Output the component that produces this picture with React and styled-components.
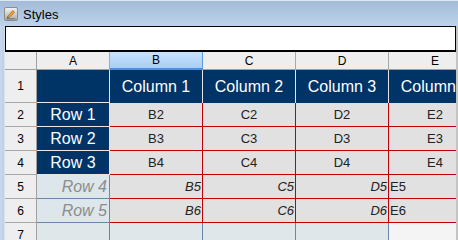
import React from "react";
import styled, { createGlobalStyle, css } from "styled-components";

const GlobalStyle = createGlobalStyle`
  html, body {
    margin: 0;
    padding: 0;
    background: #ffffff;
  }
  body {
    font-family: "Liberation Sans", Arial, sans-serif;
  }
`;

const columns = ["A", "B", "C", "D", "E"];

// each row: kind of the A cell and the texts of B..E
const rows = [
  { no: 1, head: { kind: "navy", text: "" }, kind: "navyHead", cells: ["Column 1", "Column 2", "Column 3", "Column 4"] },
  { no: 2, head: { kind: "navy", text: "Row 1" }, kind: "data", cells: ["B2", "C2", "D2", "E2"] },
  { no: 3, head: { kind: "navy", text: "Row 2" }, kind: "data", cells: ["B3", "C3", "D3", "E3"] },
  { no: 4, head: { kind: "navy", text: "Row 3" }, kind: "data", cells: ["B4", "C4", "D4", "E4"] },
  { no: 5, head: { kind: "soft", text: "Row 4" }, kind: "italic", cells: ["B5", "C5", "D5", "E5"] },
  { no: 6, head: { kind: "soft", text: "Row 5" }, kind: "italic", cells: ["B6", "C6", "D6", "E6"] },
  { no: 7, head: { kind: "empty", text: "" }, kind: "empty", cells: ["", "", "", ""] },
];

const Window = styled.div`
  width: 458px;
  height: 240px;
  display: flex;
  flex-direction: column;
  overflow: hidden;
  background: #c6d7ec;
`;

const TitleBar = styled.div`
  height: 26px;
  flex: none;
  box-sizing: border-box;
  display: flex;
  align-items: center;
  gap: 5px;
  padding: 1px 0 0 4px;
  border-top: 1px solid #dfe8f2;
  background: linear-gradient(to bottom, #a2bbd8, #bed3ea);
`;

const TitleText = styled.span`
  font-size: 13px;
  color: #000;
`;

const Body = styled.div`
  flex: 1;
  display: flex;
  min-height: 0;
`;

const LeftFrame = styled.div`
  width: 5px;
  flex: none;
  box-sizing: border-box;
  border-left: 2px solid #c6d7ec;
  border-right: 1px solid #d3e1f1;
  background: #bfd2e9;
`;

const RightFrame = styled.div`
  width: 2px;
  flex: none;
  background: #c4c4c4;
`;

const Content = styled.div`
  flex: 1;
  min-width: 0;
  display: flex;
  flex-direction: column;
  overflow: hidden;
  background: #f4f4f4;
`;

const InputBox = styled.div`
  height: 26px;
  flex: none;
  box-sizing: border-box;
  background: #ffffff;
  border: 1px solid #000;
  border-bottom-width: 2px;
`;

const Grid = styled.div`
  display: grid;
  grid-template-columns: 32px 73px 93px 93px 93px 93px;
  grid-template-rows: 18px 33px repeat(6, 24px);
`;

const kinds = {
  corner: css`
    background: #eeeeee;
    border-right: 1px solid #a0a0a0;
    border-bottom: 1px solid #a0a0a0;
  `,
  colHead: css`
    background: #eeeeee;
    border-right: 1px solid #a8a8a8;
    border-bottom: 1px solid #a0a0a0;
    font-size: 12px;
    color: #000;
    justify-content: center;
  `,
  colHeadSel: css`
    background: linear-gradient(to bottom, #c8e2fc, #a9cff6);
    border-right: 1px solid #5b9be3;
    border-bottom: 2px solid #4c8fe0;
    font-size: 12px;
    color: #000;
    justify-content: center;
  `,
  rowHead: css`
    background: #eeeeee;
    border-right: 1px solid #a0a0a0;
    border-bottom: 1px solid #a8a8a8;
    font-size: 12px;
    color: #000;
    justify-content: center;
  `,
  navy: css`
    background: #003366;
    border-right: 1px solid #e6e6e6;
    border-bottom: 1px solid #e6e6e6;
    font-size: 16px;
    color: #ffffff;
    justify-content: center;
  `,
  navyHead: css`
    background: #003366;
    border-right: 1px solid #e6e6e6;
    font-size: 16px;
    color: #ffffff;
    justify-content: center;
  `,
  data: css`
    background: #e1e1e1;
    border-right: 1px solid #c00000;
    border-bottom: 1px solid #c00000;
    font-size: 13px;
    color: #222;
    justify-content: center;
  `,
  italic: css`
    background: #e1e1e1;
    border-right: 1px solid #c00000;
    border-bottom: 1px solid #c00000;
    font-size: 13px;
    font-style: italic;
    color: #222;
    justify-content: flex-end;
    padding-right: 1px;
  `,
  plain: css`
    background: #e1e1e1;
    border-right: 1px solid #c00000;
    border-bottom: 1px solid #c00000;
    font-size: 13px;
    color: #222;
    justify-content: flex-start;
    padding-left: 1px;
  `,
  soft: css`
    background: #dde6ea;
    border-right: 1px solid #6a86aa;
    border-bottom: 1px solid #6a86aa;
    font-size: 16px;
    font-style: italic;
    color: #8c8c8c;
    justify-content: flex-end;
    padding-right: 2px;
  `,
  empty: css`
    background: #dfe7ea;
    border-right: 1px solid #6a86aa;
  `,
  blank: css`
    background: #f4f4f4;
  `,
};

const Cell = styled.div`
  box-sizing: border-box;
  display: flex;
  align-items: center;
  white-space: nowrap;
  overflow: hidden;
  min-width: 0;
  ${(p) => kinds[p.$kind]}
`;

function AppIcon() {
  return (
    <svg width="14" height="14" viewBox="0 0 16 16">
      <defs>
        <linearGradient id="ig" x1="0" y1="0" x2="0" y2="1">
          <stop offset="0" stopColor="#f4f4f4" />
          <stop offset="1" stopColor="#a9a9a9" />
        </linearGradient>
      </defs>
      <rect x="0.5" y="0.5" width="15" height="15" rx="2" fill="url(#ig)" stroke="#7d7d7d" />
      <path d="M4 11 L10 4 L12 6 L6 12 Z" fill="#f0a030" stroke="#b35f10" strokeWidth="0.8" />
      <path d="M3 13 L4 11 L6 12 Z" fill="#555" />
      <rect x="3" y="13" width="10" height="1" fill="#666" />
    </svg>
  );
}

function cellKind(row, i) {
  if (row.kind === "italic" && i === 3) return "plain";
  if (row.kind === "empty") return i === 3 ? "blank" : "empty";
  return row.kind;
}

export default function App() {
  return (
    <>
      <GlobalStyle />
      <Window>
        <TitleBar>
          <AppIcon />
          <TitleText>Styles</TitleText>
        </TitleBar>
        <Body>
          <LeftFrame />
          <Content>
            <InputBox />
            <Grid>
              <Cell $kind="corner" />
              {columns.map((c) => (
                <Cell key={c} $kind={c === "B" ? "colHeadSel" : "colHead"}>
                  {c}
                </Cell>
              ))}
              {rows.map((row) => (
                <React.Fragment key={row.no}>
                  <Cell $kind="rowHead">{row.no}</Cell>
                  <Cell $kind={row.head.kind}>{row.head.text}</Cell>
                  {row.cells.map((t, i) => (
                    <Cell key={i} $kind={cellKind(row, i)}>
                      {t}
                    </Cell>
                  ))}
                </React.Fragment>
              ))}
            </Grid>
          </Content>
          <RightFrame />
        </Body>
      </Window>
    </>
  );
}
